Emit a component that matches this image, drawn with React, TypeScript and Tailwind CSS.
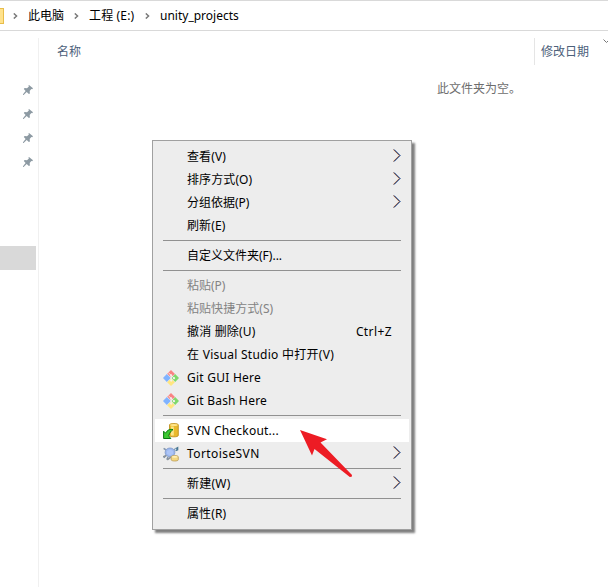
import React from 'react';

type Entry = {
  label: string;
  spacing?: string;
  icon?: React.ReactNode;
  shortcut?: string;
  submenu?: boolean;
  disabled?: boolean;
  active?: boolean;
};

const GitIcon = () => (
  <svg width="16" height="16" viewBox="0 0 16 16">
    <path d="M8 0l4 4-2.2 2L8 7.2 4.2 3.8z" fill="#f98383" />
    <path d="M3.8 4L7.8 8l-4 4L0 8z" fill="#80b3ff" />
    <path d="M12.2 4L16 8l-3.8 4L8.4 8z" fill="#80d96b" />
    <path d="M8 8.6l3.9 3.6L8 16l-3.9-3.8z" fill="#ffe680" />
    <path d="M5.4 2.8l2.8 2.6v5.2M8.2 5.4L11 8.2" fill="none" stroke="#f2efec" strokeWidth="1" />
    <circle cx="8.2" cy="5.4" r="1.1" fill="#f2efec" />
    <circle cx="8.2" cy="10.6" r="1.1" fill="#f2efec" />
    <circle cx="11" cy="8.2" r="1.1" fill="#f2efec" />
  </svg>
);

const CheckoutIcon = () => (
  <svg width="16" height="16" viewBox="0 0 16 16">
    <path d="M6.5 1.8C6.5.2 15.3.2 15.3 1.8v10.7c0 1.8-8.8 1.8-8.8 0z" fill="#e9b92c" stroke="#b78612" strokeWidth=".8" />
    <path d="M8 3.5h2.8v9H8z" fill="#fbe48a" />
    <ellipse cx="10.9" cy="2" rx="3.8" ry="1.1" fill="#ffe58a" />
    <path d="M.6 15.5V8.2l2 2C4.2 7 7 5.8 10 6.6 8 7.8 6.8 9.6 5.6 12.8l2.2 2.7z" fill="#3cc932" stroke="#087a0d" strokeWidth="1" />
  </svg>
);

const TortoiseIcon = () => (
  <svg width="16" height="16" viewBox="0 0 16 16">
    <path d="M3.2 4L.6 2.4M3 9L1 11.8M5 11l-1.2 2.6M11 4l2-1.8" stroke="#8294aa" strokeWidth="1.5" />
    <ellipse cx="7" cy="6.4" rx="4.9" ry="4.4" fill="#9db8ee" stroke="#7f98c8" strokeWidth=".8" />
    <path d="M4 5l3-1.5L10 5v3L7 9.6 4 8z" fill="#adc5f7" />
    <path d="M11.8 2.4L15.3.5v3.8l-2.5.9z" fill="#4a7894" />
    <circle cx="12.7" cy="3.2" r=".7" fill="#e8f3fa" />
    <path d="M0 10.8l3.4-1M4.3 13.9l3.5-2.7" stroke="#8a929a" strokeWidth="1.5" />
    <path d="M8.2 10.8c0-1.6 7.1-1.6 7.1 0v3c0 1.6-7.1 1.6-7.1 0z" fill="#f4d780" stroke="#b99b55" strokeWidth=".8" />
    <ellipse cx="11.7" cy="10.9" rx="3" ry=".8" fill="#fff1ba" />
  </svg>
);

const groups: Entry[][] = [
  [
    { label: '查看(V)', spacing: 'tracking-[0.1px]', submenu: true },
    { label: '排序方式(O)', spacing: 'tracking-[0.1px]', submenu: true },
    { label: '分组依据(P)', submenu: true },
    { label: '刷新(E)', spacing: 'tracking-[0.1px]' },
  ],
  [{ label: '自定义文件夹(F)...' }],
  [
    { label: '粘贴(P)', disabled: true },
    { label: '粘贴快捷方式(S)', spacing: 'tracking-[0.05px]', disabled: true },
    { label: '撤消 删除(U)', spacing: 'tracking-[0.18px]', shortcut: 'Ctrl+Z' },
    { label: '在 Visual Studio 中打开(V)', spacing: 'tracking-[0.27px]' },
    { label: 'Git GUI Here', spacing: 'tracking-[0.24px]', icon: <GitIcon /> },
    { label: 'Git Bash Here', spacing: 'tracking-[0.22px]', icon: <GitIcon /> },
  ],
  [
    { label: 'SVN Checkout...', spacing: 'tracking-[0.22px]', icon: <CheckoutIcon />, active: true },
    { label: 'TortoiseSVN', spacing: 'tracking-[0.42px]', icon: <TortoiseIcon />, submenu: true },
  ],
  [{ label: '新建(W)', spacing: 'tracking-[0.25px]', submenu: true }],
  [{ label: '属性(R)', spacing: 'tracking-[0.1px]' }],
];

const SubmenuArrow = () => (
  <svg width="8" height="13" viewBox="0 0 8 13" fill="none">
    <path d="M.2.5l6 6-6 6" stroke="#e8a868" strokeWidth=".9" />
    <path d="M1.4.5l6 6-6 6" stroke="#4f9be6" strokeWidth=".9" />
    <path d="M.8.5l6 6-6 6" stroke="#38182c" strokeWidth=".9" />
  </svg>
);

const Crumb = () => (
  <svg width="5" height="6" viewBox="0 0 5 6" fill="none">
    <path d="M.8.4L3.6 3 .8 5.6" stroke="#777" strokeWidth="1.4" />
  </svg>
);

const Pin = () => (
  <svg width="10" height="10" viewBox="0 0 10 10">
    <path d="M6 0l4 3.2-.8 1-.9-.2-1.6 2 .2 2.4-1 .7-2.2-2L.6 10H0v-.7l2.6-3.2L.8 4l.8-1 2.4.2 1.9-1.7L5.4.7z" fill="#8d9aa3" />
  </svg>
);

const App: React.FC = () => {
  return (
    <div className="relative flex h-[587px] w-[608px] flex-col overflow-hidden bg-white font-['Noto_Sans','Noto_Sans_CJK_SC',sans-serif] text-[12px] leading-[16px] text-black">
      <header className="flex h-[31px] shrink-0 items-center border-y border-[#d9d9d9]">
        <span className="h-4 w-1 border-y border-r border-[#e8bd4a] bg-[#ffe28c]" />
        <span className="ml-[9px]"><Crumb /></span>
        <span className="ml-[10px] w-[36px]">此电脑</span>
        <span className="ml-[10px]"><Crumb /></span>
        <span className="ml-[10px] w-[46px] whitespace-nowrap tracking-[0.15px]">工程 (E:)</span>
        <span className="ml-[10px]"><Crumb /></span>
        <span className="ml-[10px]">unity_projects</span>
      </header>

      <div className="flex min-h-0 flex-1">
        <aside className="mt-[7px] w-[39px] shrink-0 border-r border-[#f0f0f0] pt-[47px]">
          <div className="flex flex-col gap-[14px] pl-[23px]">
            <Pin />
            <Pin />
            <Pin />
            <Pin />
          </div>
          <div className="mt-[79px] h-6 w-9 bg-[#d9d9d9]" />
        </aside>
        <main className="flex-1">
          <div className="flex h-[41px] pt-[7px] text-[#4c607a]">
            <span className="h-[27px] w-[496px] shrink-0 border-r border-[#e5e5e5] pl-[18px] pt-[6px]">名称</span>
            <span className="w-[68px] shrink-0 whitespace-nowrap pl-[6px] pt-[6px]">修改日期</span>
            <svg className="mt-[1px] shrink-0" width="7" height="5" viewBox="0 0 7 5" fill="none">
              <path d="M.5.5L3.5 3.5 6.5.5" stroke="#777" />
            </svg>
          </div>
          <p className="pl-[398px] pt-[9px] text-[#6d6d6d]">此文件夹为空。</p>
        </main>
      </div>

      <div className="absolute left-[152px] top-[140px] w-[260px] border border-[#a0a0a0] bg-[#ededed] py-1 shadow-[3px_3px_2px_rgba(0,0,0,0.5)]">
        {groups.map((group, i) => (
          <div key={i}>
            {i > 0 && <div className="mx-[10px] my-[3px] h-px bg-[#919191]" />}
            {group.map((item) => (
              <div
                key={item.label}
                className={`mx-[2px] flex h-[23px] items-center ${item.active ? 'bg-white' : ''} ${item.disabled ? 'text-[#838383]' : ''}`}
              >
                <span className="ml-2 w-6 shrink-0">{item.icon}</span>
                <span className={`flex-1 whitespace-nowrap ${item.spacing ?? ''}`}>{item.label}</span>
                {item.shortcut && <span className="mr-[17px] tracking-[0.4px]">{item.shortcut}</span>}
                {item.submenu && <span className="mb-[2px] mr-2"><SubmenuArrow /></span>}
              </div>
            ))}
          </div>
        ))}
      </div>

      <svg className="absolute left-[300px] top-[430px]" width="53" height="48" viewBox="0 0 53 48">
        <path d="M0 0l27 9.3-6.5 3.2L52 45l-.3 1.7-1.9.3L14.5 19 12 25.6z" fill="#ed1c24" />
      </svg>
    </div>
  );
};

export default App;
